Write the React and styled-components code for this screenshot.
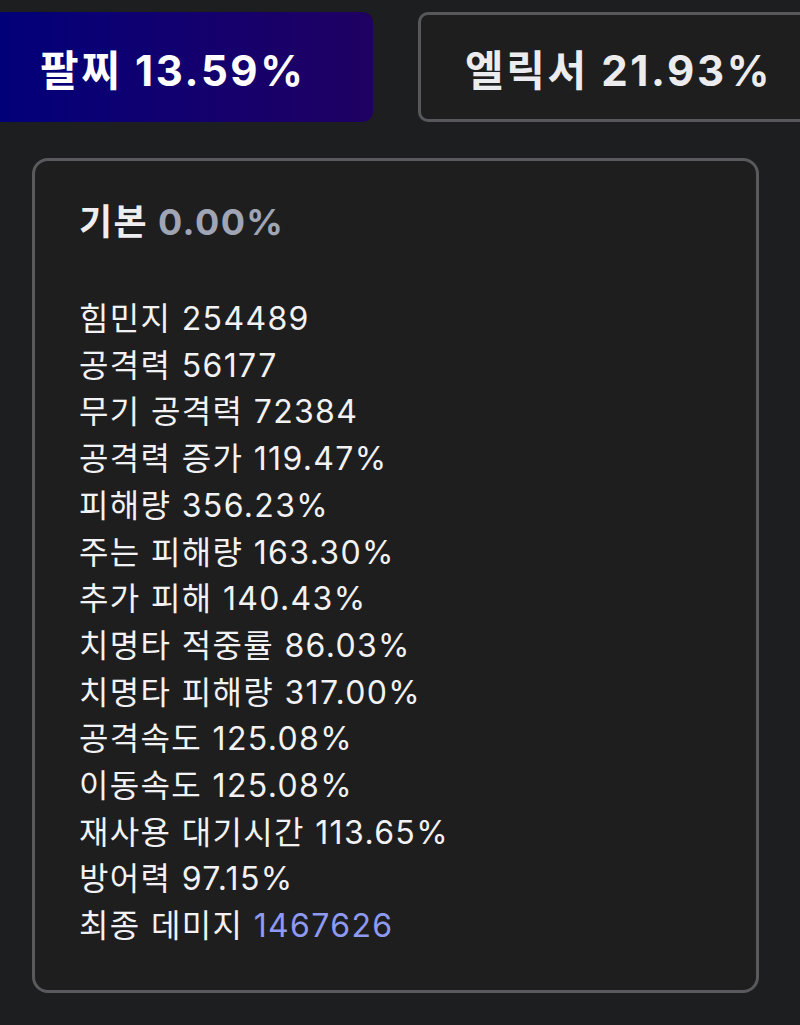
import React from "react";
import styled, { createGlobalStyle } from "styled-components";

const GlobalStyles = createGlobalStyle`
    html, body {
        margin: 0;
        padding: 0;
        background-color: #1d1e20;
    }

    body {
        font-family: "Inter", "Noto Sans CJK KR", sans-serif;
        color: #f2f2f4;
        -webkit-font-smoothing: antialiased;
    }
`;

const Page = styled.div`
    width: 800px;
    min-height: 1025px;
    overflow: hidden;
    padding-top: 12px;
    box-sizing: border-box;
`;

const TabRow = styled.div`
    display: flex;
    gap: 45px;
    margin-left: -20px;
    white-space: nowrap;
`;

const Tab = styled.button`
    flex: none;
    display: flex;
    align-items: center;
    box-sizing: border-box;
    width: ${({ $width }) => $width}px;
    height: 110px;
    padding: 0 0 0 ${({ $pad }) => $pad}px;
    border-radius: 10px;
    font-family: inherit;
    font-size: 42px;
    font-weight: 700;
    letter-spacing: 2.6px;
    color: ${({ $active }) => ($active ? "#ffffff" : "#ececee")};
    background: ${({ $active }) =>
        $active ? "linear-gradient(90deg, #00007a 0%, #13006e 55%, #1f0062 100%)" : "#1e1e1f"};
    border: ${({ $active }) => ($active ? "none" : "3px solid #58585c")};
    cursor: pointer;
`;

const Card = styled.section`
    margin: 36px 41px 0 32px;
    padding: 37px 44px 40px;
    border: 3px solid #5a5a5e;
    border-radius: 16px;
    background-color: #1e1e1f;
`;

const CardTitle = styled.h2`
    margin: 0 0 50px;
    font-size: 36px;
    font-weight: 700;
    line-height: 48px;
    letter-spacing: 1.4px;
    color: #eeeef0;
`;

const Muted = styled.span`
    color: #a0a5b6;
`;

const StatList = styled.ul`
    list-style: none;
    margin: 0;
    padding: 0;
`;

const StatItem = styled.li`
    font-size: 32px;
    font-weight: 400;
    line-height: 46.7px;
    letter-spacing: 1.35px;
    color: #f2f2f4;
`;

const Highlight = styled.span`
    color: #8e9af2;
`;

const stats = [
    ["힘민지", "254489"],
    ["공격력", "56177"],
    ["무기 공격력", "72384"],
    ["공격력 증가", "119.47%"],
    ["피해량", "356.23%"],
    ["주는 피해량", "163.30%"],
    ["추가 피해", "140.43%"],
    ["치명타 적중률", "86.03%"],
    ["치명타 피해량", "317.00%"],
    ["공격속도", "125.08%"],
    ["이동속도", "125.08%"],
    ["재사용 대기시간", "113.65%"],
    ["방어력", "97.15%"],
];

export default function App() {
    return (
        <Page>
            <GlobalStyles />
            <TabRow>
                <Tab $active $width={393} $pad={60}>팔찌 13.59%</Tab>
                <Tab $width={420} $pad={44}>엘릭서 21.93%</Tab>
            </TabRow>

            <Card>
                <CardTitle>
                    기본 <Muted>0.00%</Muted>
                </CardTitle>
                <StatList>
                    {stats.map(([label, value]) => (
                        <StatItem key={label}>
                            {label} {value}
                        </StatItem>
                    ))}
                    <StatItem>
                        최종 데미지 <Highlight>1467626</Highlight>
                    </StatItem>
                </StatList>
            </Card>
        </Page>
    );
}
